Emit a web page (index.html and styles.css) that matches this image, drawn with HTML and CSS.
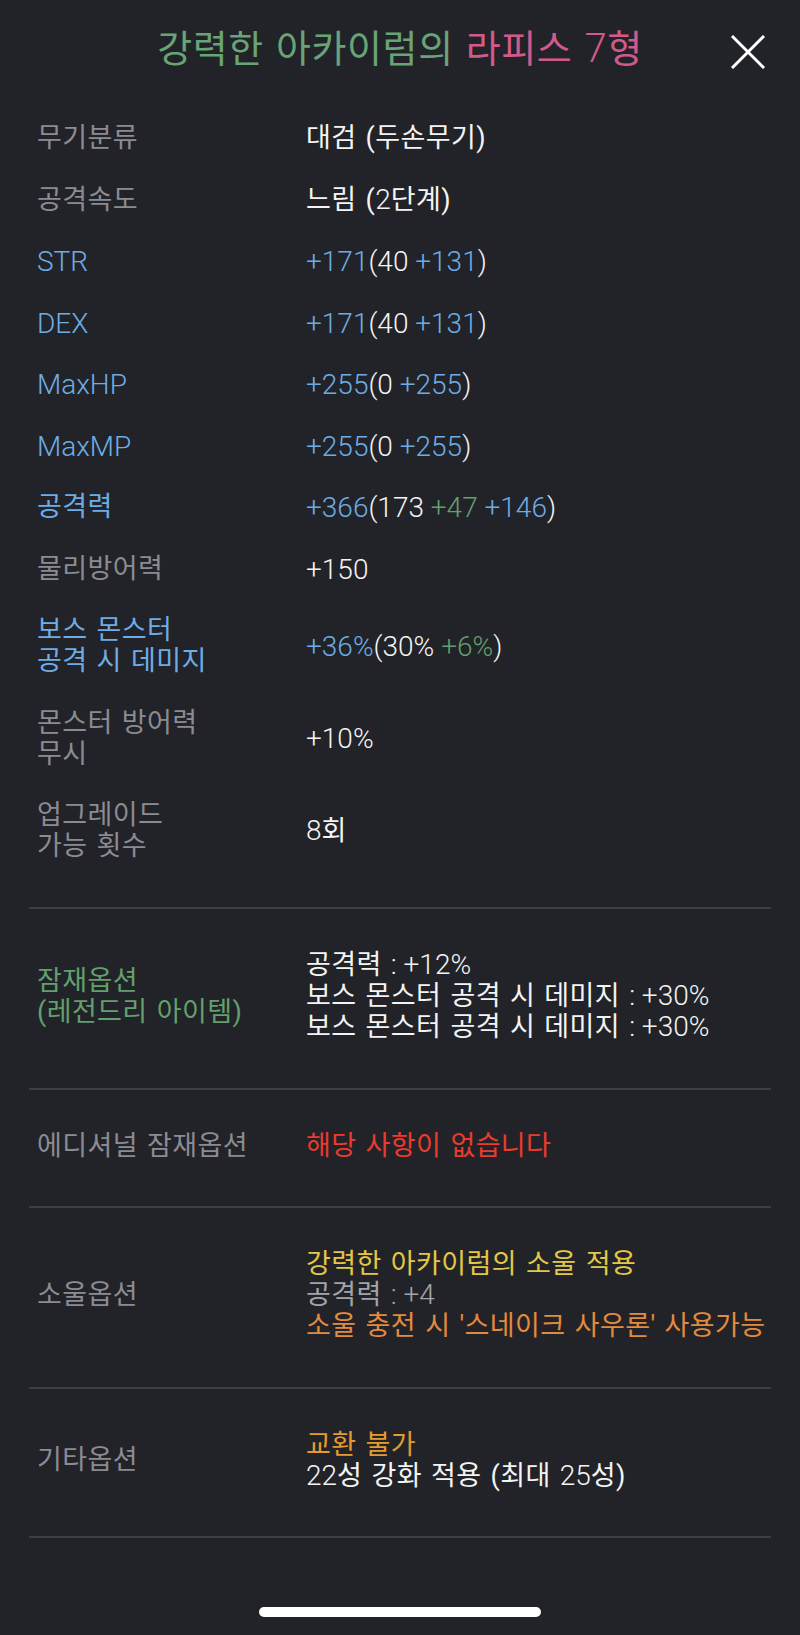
FILE: index.html
```html
<!DOCTYPE html>
<html lang="ko">
<head>
<meta charset="utf-8">
<title>강력한 아카이럼의 라피스 7형</title>
<link rel="stylesheet" href="styles.css">
</head>
<body>
<div class="screen">
  <header class="header">
    <h1 class="title"><span class="t-green">강력한 아카이럼의 </span><span class="t-pink">라피스 <span class="tl">7</span>형</span></h1>
    <button class="close" aria-label="닫기">
      <svg width="34" height="34" viewBox="0 0 34 34"><path d="M2 2 L32 32 M32 2 L2 32" stroke="#ffffff" stroke-width="3" stroke-linecap="square" fill="none"/></svg>
    </button>
  </header>

  <main class="content">
    <section class="section first">
      <div class="row"><div class="label gray">무기분류</div><div class="value white">대검 (두손무기)</div></div>
      <div class="row"><div class="label gray">공격속도</div><div class="value white">느림 (<span class="l">2</span>단계)</div></div>
      <div class="row"><div class="label blue l">STR</div><div class="value white l"><span class="blue">+171</span>(40 <span class="blue">+131</span>)</div></div>
      <div class="row"><div class="label blue l">DEX</div><div class="value white l"><span class="blue">+171</span>(40 <span class="blue">+131</span>)</div></div>
      <div class="row"><div class="label blue l">MaxHP</div><div class="value white l"><span class="blue">+255</span>(0 <span class="blue">+255</span>)</div></div>
      <div class="row"><div class="label blue l">MaxMP</div><div class="value white l"><span class="blue">+255</span>(0 <span class="blue">+255</span>)</div></div>
      <div class="row"><div class="label blue">공격력</div><div class="value white l"><span class="blue">+366</span>(173 <span class="green">+47</span> <span class="blue">+146</span>)</div></div>
      <div class="row"><div class="label gray">물리방어력</div><div class="value white l">+150</div></div>
      <div class="row"><div class="label blue">보스 몬스터<br>공격 시 데미지</div><div class="value white l"><span class="blue">+36%</span>(30% <span class="green">+6%</span>)</div></div>
      <div class="row"><div class="label gray">몬스터 방어력<br>무시</div><div class="value white l">+10%</div></div>
      <div class="row"><div class="label gray">업그레이드<br>가능 횟수</div><div class="value white"><span class="l">8</span>회</div></div>
    </section>

    <section class="section">
      <div class="row"><div class="label green">잠재옵션<br>(레전드리 아이템)</div>
        <div class="value white">공격력 <span class="l">: +12%</span><br>보스 몬스터 공격 시 데미지 <span class="l">: +30%</span><br>보스 몬스터 공격 시 데미지 <span class="l">: +30%</span></div></div>
    </section>

    <section class="section">
      <div class="row"><div class="label gray">에디셔널 잠재옵션</div><div class="value red">해당 사항이 없습니다</div></div>
    </section>

    <section class="section">
      <div class="row"><div class="label gray">소울옵션</div>
        <div class="value"><span class="yellow">강력한 아카이럼의 소울 적용</span><br><span class="soft">공격력 <span class="l">: +4</span></span><br><span class="orange">소울 충전 시 '스네이크 사우론' 사용가능</span></div></div>
    </section>

    <section class="section">
      <div class="row"><div class="label gray">기타옵션</div>
        <div class="value"><span class="gold">교환 불가</span><br><span class="white"><span class="l">22</span>성 강화 적용 (최대 <span class="l">25</span>성)</span></div></div>
    </section>
  </main>

  <footer class="footer"><div class="home-indicator"></div></footer>
</div>
</body>
</html>
```

FILE: styles.css
```css
* { box-sizing: border-box; }

html, body {
  margin: 0;
  padding: 0;
  background: #222328;
}

body {
  font-family: Roboto, "Noto Sans CJK KR", sans-serif;
  font-size: 27px;
  line-height: 31px;
  letter-spacing: 0.4px;
  word-spacing: 2px;
  color: #f2f2f2;
}

.screen {
  width: 800px;
  min-height: 1635px;
  display: flex;
  flex-direction: column;
}

.header {
  position: relative;
  height: 108px;
  display: flex;
  justify-content: center;
  align-items: flex-start;
  padding-top: 26px;
}

.title {
  margin: 0;
  font-size: 38px;
  line-height: 46px;
  font-weight: 400;
  letter-spacing: 0.6px;
}

.t-green { color: #68a476; }
.t-pink { color: #d05b8b; }
.tl { font-size: 40px; font-weight: 300; line-height: 1; }

.close {
  position: absolute;
  right: 35px;
  top: 35px;
  width: 34px;
  height: 34px;
  padding: 0;
  border: 0;
  background: transparent;
  display: block;
}
.close svg { display: block; }

.content {
  padding: 0 29px;
}

.section {
  border-bottom: 2px solid #3c3e47;
  padding: 41px 0 44.5px;
}

.section.first {
  padding: 0 0 29.5px;
}

.row {
  display: grid;
  grid-template-columns: 269px 1fr;
  align-items: center;
  padding-left: 8px;
}

.section.first .row {
  padding-top: 15.25px;
  padding-bottom: 15.25px;
}

.label, .value { white-space: nowrap; }

.l {
  font-size: 28px;
  font-weight: 300;
  letter-spacing: 0;
  word-spacing: 0;
}

.value .l, .value.l { line-height: 28px; }
.section.first .value.l, .section.first .label.l { line-height: 31px; }

.gray { color: #8b8c92; }
.blue { color: #6cade6; }
.green { color: #62a06d; }
.white { color: #f4f4f4; }
.red { color: #ec3a2f; }
.yellow { color: #e4c845; }
.soft { color: #a3a4a9; }
.orange { color: #e28b3d; }
.gold { color: #e39b30; }

.footer {
  margin-top: auto;
  display: flex;
  justify-content: center;
  padding-bottom: 18px;
}

.home-indicator {
  width: 282px;
  height: 10px;
  border-radius: 5px;
  background: #ffffff;
}
```
